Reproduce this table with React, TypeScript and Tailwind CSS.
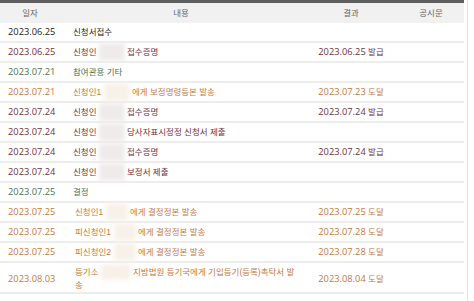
import React from "react";

type Tone = "black" | "maroon" | "green" | "orange";

const toneClass: Record<Tone, string> = {
  black: "text-[#222222]",
  maroon: "text-[#74303d]",
  green: "text-[#4a7452]",
  orange: "text-[#c8793c]",
};

const blurClass: Record<Tone, string> = {
  black: "bg-[#eeecec]",
  maroon: "bg-[#efebeb]",
  green: "bg-[#eceeec]",
  orange: "bg-[#f8f1ea]",
};

type Row = {
  date: string;
  tone: Tone;
  name?: string;
  firstW?: number;
  pad?: number;
  text: string;
  result?: string;
  resultWord?: string;
};

const rows: Row[] = [
  { date: "2023.06.25", tone: "black", text: "신청서접수" },
  { date: "2023.06.25", tone: "maroon", name: "신청인", firstW: 54, text: "접수증명", result: "2023.06.25", resultWord: "발급" },
  { date: "2023.07.21", tone: "green", text: "참여관용 기타" },
  { date: "2023.07.21", tone: "orange", name: "신청인1", firstW: 59, text: "에게 보정명령등본 발송", result: "2023.07.23", resultWord: "도달" },
  { date: "2023.07.24", tone: "maroon", name: "신청인", firstW: 54, text: "접수증명", result: "2023.07.24", resultWord: "발급" },
  { date: "2023.07.24", tone: "maroon", name: "신청인", firstW: 54, text: "당사자표시정정 신청서 제출" },
  { date: "2023.07.24", tone: "maroon", name: "신청인", firstW: 54, text: "접수증명", result: "2023.07.24", resultWord: "발급" },
  { date: "2023.07.24", tone: "maroon", name: "신청인", firstW: 54, text: "보정서 제출" },
  { date: "2023.07.25", tone: "green", text: "결정" },
  { date: "2023.07.25", tone: "orange", name: "신청인1", firstW: 55, pad: 2, text: "에게 결정정본 발송", result: "2023.07.25", resultWord: "도달" },
  { date: "2023.07.25", tone: "orange", name: "피신청인1", firstW: 63, pad: 2, text: "에게 결정정본 발송", result: "2023.07.28", resultWord: "도달" },
  { date: "2023.07.25", tone: "orange", name: "피신청인2", firstW: 63, pad: 2, text: "에게 결정정본 발송", result: "2023.07.28", resultWord: "도달" },
];

function First({ row }: { row: Row }) {
  return (
    <span className="flex shrink-0 items-center" style={{ width: row.firstW }}>
      <span className="whitespace-nowrap">{row.name}</span>
      <span className={`ml-[3px] mr-[2px] h-[18px] flex-1 blur-[2px] ${blurClass[row.tone]}`} />
    </span>
  );
}

function DateText({ d }: { d: string }) {
  return (
    <span className="text-[9.3px]" style={{ fontFamily: '"Open Sans", "Noto Sans CJK KR", sans-serif' }}>
      {d}
    </span>
  );
}

export default function App() {
  return (
    <div
      className="flex h-[301px] w-[474px] overflow-hidden bg-white text-[8.5px]"
      style={{ fontFamily: '"Liberation Sans", "Noto Sans CJK KR", sans-serif' }}
    >
      <div className="flex w-[464px] flex-col">
        <div className="h-[3px] bg-[#5e5e5e]" />
        <div className="flex h-[20px] items-center bg-[#f1f1f1] text-[#666666]">
          <div className="w-[60px] text-center">일자</div>
          <div className="w-[242px] text-center">내용</div>
          <div className="w-[98px] text-center">결과</div>
          <div className="w-[62px] text-center">공시문</div>
        </div>
        {rows.map((r, i) => (
          <div
            key={i}
            className={`flex h-[20px] items-center border-b-2 border-[#ededed] ${toneClass[r.tone]}`}
          >
            <div className="w-[65px] whitespace-nowrap pl-[8px]">
              <DateText d={r.date} />
            </div>
            <div className="flex w-[237px] items-center whitespace-nowrap" style={{ paddingLeft: 8 + (r.pad ?? 0) }}>
              {r.name && <First row={r} />}
              <span>{r.text}</span>
            </div>
            <div className="w-[98px] whitespace-nowrap text-center">
              {r.result && (
                <>
                  <DateText d={r.result} /> {r.resultWord}
                </>
              )}
            </div>
            <div className="w-[62px]" />
          </div>
        ))}
        <div className={`flex h-[31px] items-center border-b-2 border-[#ededed] ${toneClass.orange}`}>
          <div className="w-[65px] whitespace-nowrap pl-[8px] pt-[3px]">
            <DateText d="2023.08.03" />
          </div>
          <div className="flex w-[237px] flex-col pl-[10px] leading-[11px]">
            <div className="flex items-center whitespace-nowrap">
              <span className="flex w-[58px] shrink-0 items-center">
                <span>등기소</span>
                <span className={`ml-[3px] mr-[2px] h-[16px] flex-1 blur-[2px] ${blurClass.orange}`} />
              </span>
              <span>지방법원 등기국에게 기입등기(등록)촉탁서 발</span>
            </div>
            <div>송</div>
          </div>
          <div className="w-[98px] whitespace-nowrap pt-[3px] text-center">
            <DateText d="2023.08.04" /> 도달
          </div>
          <div className="w-[62px]" />
        </div>
      </div>
      <div className="ml-[3px] w-px bg-[#e6e6e6]" />
      <div className="flex-1 bg-white" />
    </div>
  );
}
